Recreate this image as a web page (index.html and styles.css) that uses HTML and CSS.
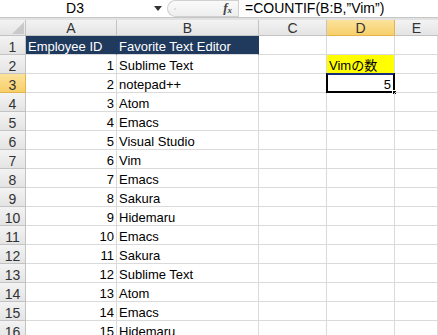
FILE: index.html
```html
<!DOCTYPE html>
<html>
<head>
<meta charset="utf-8">
<link rel="stylesheet" href="styles.css">
</head>
<body>
<div class="app">
  <div class="fbar">
    <div class="namebox">D3</div>
    <div class="dd"><svg width="8" height="5" viewBox="0 0 8 5"><path d="M0 0h8L4 5z" fill="#333"/></svg></div>
    <div class="pill">
      <span class="dot"></span>
      <span class="fx"><i>f</i><sub>x</sub></span>
    </div>
    <div class="formula">=COUNTIF(B:B,”Vim”)</div>
  </div>
  <div class="gap"></div>
  <div class="sheet">
    <div class="h corner"><svg width="12" height="12" viewBox="0 0 12 12"><path d="M12 0V12H0z" fill="#c9c9c9"/></svg></div>
    <div class="h col">A</div>
    <div class="h col">B</div>
    <div class="h col">C</div>
    <div class="h col sel">D</div>
    <div class="h col last">E</div>

    <div class="h rh">1</div>
    <div class="c hd">Employee ID</div>
    <div class="c hd">Favorite Text Editor</div>
    <div class="c"></div><div class="c"></div><div class="c"></div>

    <div class="h rh">2</div>
    <div class="c num">1</div><div class="c">Sublime Text</div><div class="c"></div><div class="c yel">Vimの数</div><div class="c"></div>

    <div class="h rh sel">3</div>
    <div class="c num">2</div><div class="c">notepad++</div><div class="c"></div><div class="c num active">5<span class="handle"></span></div><div class="c"></div>

    <div class="h rh">4</div>
    <div class="c num">3</div><div class="c">Atom</div><div class="c"></div><div class="c"></div><div class="c"></div>

    <div class="h rh">5</div>
    <div class="c num">4</div><div class="c">Emacs</div><div class="c"></div><div class="c"></div><div class="c"></div>

    <div class="h rh">6</div>
    <div class="c num">5</div><div class="c">Visual Studio</div><div class="c"></div><div class="c"></div><div class="c"></div>

    <div class="h rh">7</div>
    <div class="c num">6</div><div class="c">Vim</div><div class="c"></div><div class="c"></div><div class="c"></div>

    <div class="h rh">8</div>
    <div class="c num">7</div><div class="c">Emacs</div><div class="c"></div><div class="c"></div><div class="c"></div>

    <div class="h rh">9</div>
    <div class="c num">8</div><div class="c">Sakura</div><div class="c"></div><div class="c"></div><div class="c"></div>

    <div class="h rh">10</div>
    <div class="c num">9</div><div class="c">Hidemaru</div><div class="c"></div><div class="c"></div><div class="c"></div>

    <div class="h rh">11</div>
    <div class="c num">10</div><div class="c">Emacs</div><div class="c"></div><div class="c"></div><div class="c"></div>

    <div class="h rh">12</div>
    <div class="c num">11</div><div class="c">Sakura</div><div class="c"></div><div class="c"></div><div class="c"></div>

    <div class="h rh">13</div>
    <div class="c num">12</div><div class="c">Sublime Text</div><div class="c"></div><div class="c"></div><div class="c"></div>

    <div class="h rh">14</div>
    <div class="c num">13</div><div class="c">Atom</div><div class="c"></div><div class="c"></div><div class="c"></div>

    <div class="h rh">15</div>
    <div class="c num">14</div><div class="c">Emacs</div><div class="c"></div><div class="c"></div><div class="c"></div>

    <div class="h rh">16</div>
    <div class="c num">15</div><div class="c">Hidemaru</div><div class="c"></div><div class="c"></div><div class="c"></div>
  </div>
</div>
</body>
</html>
```
FILE: styles.css
```css
* { box-sizing: border-box; }
html, body { margin: 0; padding: 0; }
body {
  width: 438px;
  height: 335px;
  overflow: hidden;
  background: #fff;
  font-family: "Liberation Sans", "Noto Sans CJK JP", sans-serif;
  color: #000;
}
.app { width: 438px; }
.fbar {
  height: 18px;
  display: flex;
  align-items: center;
  background: #fff;
  border-bottom: 1px solid #c6c6c6;
}
.namebox {
  width: 150px;
  text-align: center;
  font-size: 14px;
  line-height: 17px;
}
.dd {
  width: 16px;
  display: flex;
  justify-content: center;
  align-items: center;
}
.pill {
  margin-left: 1px;
  width: 71px;
  height: 17px;
  border: 1px solid #d0d0d0;
  border-right: none;
  border-radius: 9px 0 0 9px;
  background: linear-gradient(#fafafa, #eeeeee);
  display: flex;
  align-items: center;
  justify-content: space-between;
  padding: 0 6px 0 6px;
}
.dot { width: 2px; height: 2px; background: #d8d8d8; border-radius: 1px; }
.fx {
  font-family: "Liberation Serif", serif;
  font-size: 13px;
  color: #444;
  line-height: 14px;
}
.fx i { font-weight: bold; }
.fx sub { font-size: 9px; font-style: italic; font-weight: bold; vertical-align: -1px; }
.formula {
  flex: 1;
  height: 17px;
  border-left: 1px solid #d0d0d0;
  padding-left: 6px;
  font-size: 14px;
  line-height: 17px;
}
.gap { height: 2px; background: #e2e2e2; }
.sheet {
  display: grid;
  grid-template-columns: 26px 91px 142px 68px 68px 43px;
  grid-template-rows: 16px repeat(16, 19px);
}
.h {
  background: linear-gradient(#f3f3f3, #e4e4e4);
  border-right: 1px solid #c3c3c3;
  border-bottom: 1px solid #c3c3c3;
  font-size: 14px;
  color: #333;
  display: flex;
  align-items: center;
  justify-content: center;
}
.corner { justify-content: flex-end; align-items: flex-end; padding: 0 1px 1px 0; }
.col { line-height: 15px; padding-top: 1px; }
.col.last { border-right: none; }
.h.sel {
  background: linear-gradient(#fbe39c, #f7cf6a);
  border-right-color: #e3b34c;
  border-bottom-color: #e3b34c;
  color: #333;
}
.rh { font-size: 14px; padding-top: 3px; }
.c {
  border-right: 1px solid #dadada;
  border-bottom: 1px solid #dadada;
  font-size: 13px;
  line-height: 21px;
  padding: 0 2px;
  white-space: nowrap;
  overflow: visible;
  position: relative;
}
.c.hd {
  background: #1f3a5d;
  color: #fff;
  border-right-color: #1f3a5d;
  border-bottom-color: #dadada;
}
.num { text-align: right; }
.yel { background: #ffff00; }
.active {
  border: 2px solid #000;
  border-top-color: #1a2d7a;
  margin: -1px 0 0 -1px;
  width: calc(100% + 1px);
  height: calc(100% + 1px);
  line-height: 19px;
}
.handle {
  position: absolute;
  right: -4px;
  bottom: -4px;
  width: 5px;
  height: 5px;
  background: #000;
  border: 1px solid #fff;
}
```
